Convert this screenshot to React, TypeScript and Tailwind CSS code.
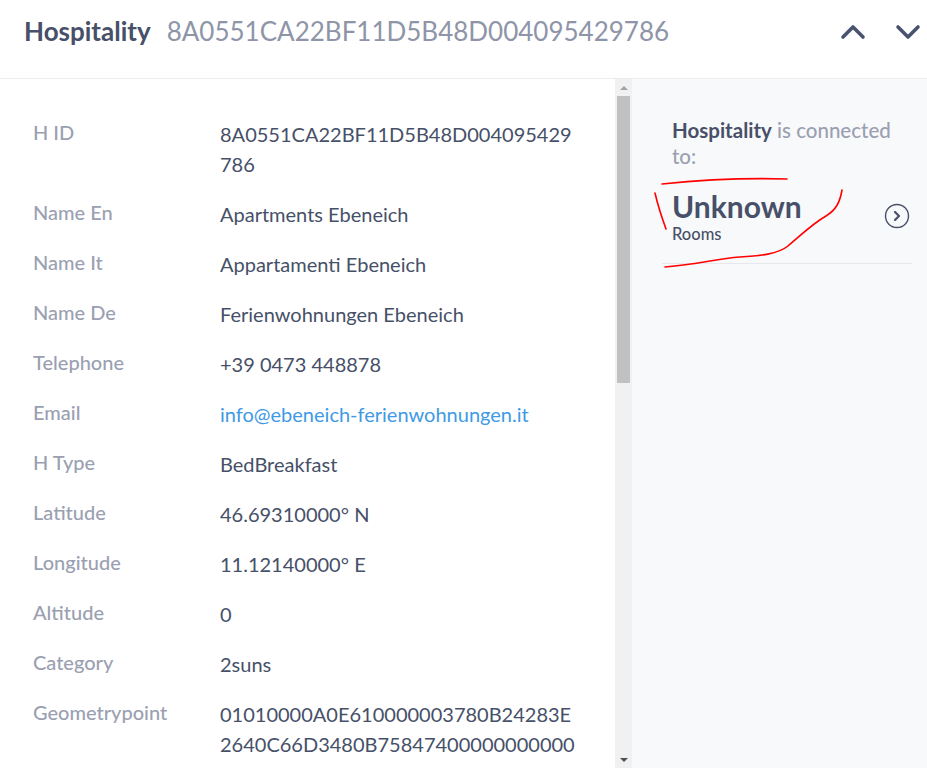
import React from "react";

const rows: { label: string; value: string; link?: boolean }[] = [
  { label: "H ID", value: "8A0551CA22BF11D5B48D004095429786" },
  { label: "Name En", value: "Apartments Ebeneich" },
  { label: "Name It", value: "Appartamenti Ebeneich" },
  { label: "Name De", value: "Ferienwohnungen Ebeneich" },
  { label: "Telephone", value: "+39 0473 448878" },
  { label: "Email", value: "info@ebeneich-ferienwohnungen.it", link: true },
  { label: "H Type", value: "BedBreakfast" },
  { label: "Latitude", value: "46.69310000° N" },
  { label: "Longitude", value: "11.12140000° E" },
  { label: "Altitude", value: "0" },
  { label: "Category", value: "2suns" },
  {
    label: "Geometrypoint",
    value: "01010000A0E610000003780B24283E2640C66D3480B758474000000000000000000",
  },
];

function Chevron({ up }: { up?: boolean }) {
  return (
    <svg width="26" height="18" viewBox="0 0 26 18" fill="none">
      <path
        d={up ? "M3 14 L13 4 L23 14" : "M3 4 L13 14 L23 4"}
        stroke="#49536f"
        strokeWidth="3.6"
        strokeLinecap="round"
        strokeLinejoin="round"
      />
    </svg>
  );
}

function Scrollbar() {
  return (
    <div className="flex w-[17px] shrink-0 flex-col bg-[#f1f1f1]">
      <div className="flex h-[17px] items-center justify-center">
        <div className="h-0 w-0 border-x-[4px] border-b-[4px] border-x-transparent border-b-[#a3a3a3]" />
      </div>
      <div className="mx-[2px] h-[287px] bg-[#c1c1c1]" />
      <div className="flex-1" />
      <div className="flex h-[17px] items-center justify-center">
        <div className="h-0 w-0 border-x-[4px] border-t-[4px] border-x-transparent border-t-[#505050]" />
      </div>
    </div>
  );
}

export default function App() {
  return (
    <div
      className="relative flex h-[768px] w-[927px] flex-col overflow-hidden bg-white"
      style={{ fontFamily: "Lato, 'Noto Sans', sans-serif" }}
    >
      <header className="flex h-[79px] shrink-0 items-center border-b border-[#ececee] pb-[15px] pl-[24px] pr-[6px]">
        <h1 className="text-[26px] font-bold text-[#475068]">Hospitality</h1>
        <span className="ml-[16px] text-[26px] text-[#8e95a8]">8A0551CA22BF11D5B48D004095429786</span>
        <div className="ml-auto flex items-center gap-[29px]">
          <Chevron up />
          <Chevron />
        </div>
      </header>

      <div className="flex min-h-0 flex-1">
        <div className="w-[615px] shrink-0 overflow-hidden pl-[33px] pt-[40px]">
          <div className="flex flex-col gap-[20px]">
            {rows.map((r) => (
              <div key={r.label} className="grid grid-cols-[187px_360px]">
                <div className="text-[20px] font-medium leading-[26px] text-[#9aa0b1]">{r.label}</div>
                <div
                  className={`break-all text-[20px] leading-[30px] ${
                    r.link ? "text-[#3f9ae5]" : "text-[#465068]"
                  }`}
                >
                  {r.value}
                </div>
              </div>
            ))}
          </div>
        </div>

        <Scrollbar />

        <aside className="flex-1 bg-[#f8f9fb] pl-[30px] pr-[15px] pt-[38px]">
          <p className="pl-[10px] pr-[10px] text-[20.5px] font-medium leading-[26px] text-[#9aa0b1]">
            <span className="font-bold text-[#475068]">Hospitality</span> is connected to:
          </p>
          <div className="mt-[19px] flex items-center border-b border-[#e6e8ec] pb-[19px] pl-[10px] pr-[2px]">
            <div className="flex flex-col">
              <span className="text-[30px] font-bold leading-[36px] text-[#475068]">Unknown</span>
              <span className="text-[16.5px] font-medium leading-[20px] text-[#475068]">Rooms</span>
            </div>
            <div className="ml-auto">
              <svg width="26" height="26" viewBox="0 0 26 26" fill="none">
                <circle cx="13" cy="13" r="11.5" stroke="#475068" strokeWidth="1.4" />
                <path d="M11 9 L15 13 L11 17" stroke="#475068" strokeWidth="2.2" strokeLinecap="round" strokeLinejoin="round" />
              </svg>
            </div>
          </div>
        </aside>
      </div>

      {/* hand-drawn red annotation */}
      <svg className="pointer-events-none absolute left-0 top-0" width="927" height="768" viewBox="0 0 927 768" fill="none">
        <path d="M662 184 C700 180 750 178 787 179" stroke="#ff0000" strokeWidth="1.6" strokeLinecap="round" />
        <path d="M655 193 C658 206 662 218 666 229" stroke="#ff0000" strokeWidth="1.6" strokeLinecap="round" />
        <path
          d="M842 190 C840 202 836 210 826 216 C812 224 800 236 788 246 C778 254 760 256 740 257 C715 259 700 264 665 267"
          stroke="#ff0000"
          strokeWidth="1.6"
          strokeLinecap="round"
        />
      </svg>
    </div>
  );
}
